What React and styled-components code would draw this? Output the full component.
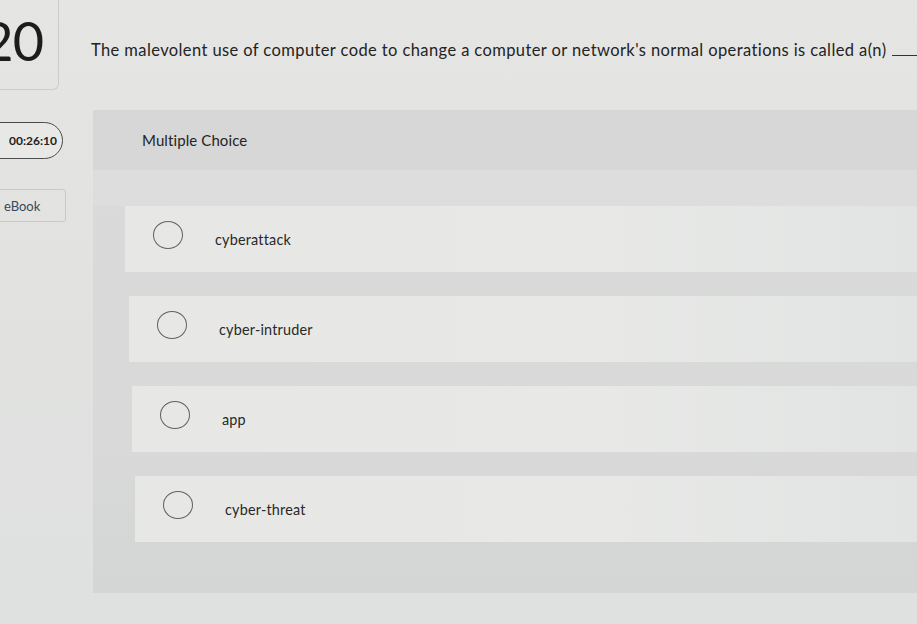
import React from 'react'
import styled, { createGlobalStyle } from 'styled-components'

const options = [
    { label: 'cyberattack', indent: 0 },
    { label: 'cyber-intruder', indent: 4 },
    { label: 'app', indent: 7 },
    { label: 'cyber-threat', indent: 10 },
]

const App = () => {
    return ( <Page>
        <GlobalStyle />
        <TopRow>
            <NumberBox>20</NumberBox>
            <Question>
                The malevolent use of computer code to change a computer or network's normal operations is called a(n)
                <Blank />
            </Question>
        </TopRow>
        <MainRow>
            <Sidebar>
                <Timer>00:26:10</Timer>
                <EBook>eBook</EBook>
            </Sidebar>
            <Panel>
                <PanelHeader>Multiple Choice</PanelHeader>
                <OptionList>
                    {options.map(o => (
                        <OptionRow key={o.label} indent={o.indent}>
                            <Radio />
                            <OptionLabel>{o.label}</OptionLabel>
                        </OptionRow>
                    ))}
                </OptionList>
            </Panel>
        </MainRow>
    </Page> );
}

const GlobalStyle = createGlobalStyle`
    html, body {
        margin: 0;
        padding: 0;
        overflow: hidden;
    }
    body {
        background: linear-gradient(180deg, #e5e6e4 0%, #e1e2e0 60%, #dfe1e0 100%);
        font-family: Lato, "Open Sans", Arial, sans-serif;
        color: #262727;
    }
`
const Page = styled.div`
    width: 917px;
    height: 624px;
    overflow: hidden;
`
const TopRow = styled.div`
    display: flex;
    align-items: flex-start;
    height: 110px;
`
const NumberBox = styled.div`
    width: 90px;
    height: 90px;
    flex-shrink: 0;
    margin-left: -31px;
    box-sizing: border-box;
    border: 1px solid #cbccca;
    border-top: none;
    border-radius: 0 0 6px 0;
    display: flex;
    align-items: center;
    justify-content: flex-end;
    padding-right: 15px;
    padding-bottom: 8px;
    font-size: 54px;
    font-weight: 400;
    color: #1c1c1c;
    letter-spacing: -1px;
`
const Question = styled.div`
    flex-shrink: 0;
    margin-left: 32px;
    margin-top: 40px;
    font-size: 16.5px;
    letter-spacing: 0.4px;
    color: #232323;
    white-space: nowrap;
    display: flex;
    align-items: baseline;
`
const Blank = styled.span`
    display: inline-block;
    width: 40px;
    margin-left: 6px;
    border-bottom: 1px solid #333;
`
const MainRow = styled.div`
    display: flex;
    align-items: flex-start;
`
const Sidebar = styled.div`
    width: 93px;
    flex-shrink: 0;
    display: flex;
    flex-direction: column;
    align-items: flex-start;
`
const Timer = styled.div`
    margin-top: 12px;
    margin-left: -20px;
    width: 83px;
    height: 37px;
    box-sizing: border-box;
    border: 1.5px solid #4a4b4b;
    border-radius: 19px;
    background: #e8e9e7;
    display: flex;
    align-items: center;
    padding-left: 28px;
    font-size: 12px;
    font-weight: 700;
    color: #222;
`
const EBook = styled.div`
    margin-top: 30px;
    margin-left: -10px;
    width: 76px;
    height: 33px;
    box-sizing: border-box;
    border: 1px solid #c9cac8;
    border-radius: 3px;
    display: flex;
    align-items: center;
    padding-left: 13px;
    font-size: 13px;
    color: #38485a;
`
const Panel = styled.div`
    flex: 1;
    height: 483px;
    background: linear-gradient(180deg, #d9dad9 0%, #d8d9d8 70%, #d3d6d5 100%);
    display: flex;
    flex-direction: column;
`
const PanelHeader = styled.div`
    height: 60px;
    display: flex;
    align-items: center;
    padding-left: 49px;
    box-sizing: border-box;
    font-size: 15px;
    letter-spacing: 0.1px;
    color: #242424;
    background: #d6d7d6;
`
const OptionList = styled.div`
    display: flex;
    flex-direction: column;
    gap: 24px;
    padding-top: 36px;
    background: linear-gradient(180deg, #dcdddc 0px, #dcdddc 36px, transparent 36px);
`
const OptionRow = styled.div`
    height: 66px;
    margin-left: ${p => 32 + p.indent}px;
    padding-left: 28px;
    display: flex;
    align-items: center;
    background: linear-gradient(90deg, #e7e8e6 0%, #e8e9e7 60%, #e1e4e3 100%);
`
const Radio = styled.span`
    width: 28px;
    height: 26px;
    flex-shrink: 0;
    border: 1.6px solid #5d6263;
    border-radius: 50%;
    margin-top: -9px;
`
const OptionLabel = styled.span`
    margin-left: 32px;
    font-size: 14.4px;
    letter-spacing: 0.2px;
    color: #272828;
`
export default App;
